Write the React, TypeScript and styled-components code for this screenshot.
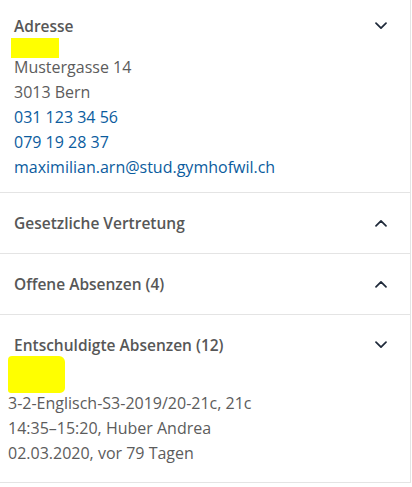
import React from 'react';
import styled, { createGlobalStyle } from 'styled-components';

const GlobalStyle = createGlobalStyle`
  body {
    margin: 0;
    background: #fff;
    font-family: "Open Sans", "Noto Sans", sans-serif;
  }
`;

const Panel = styled.div`
  width: 410px;
  border-right: 1px solid #e4e4e4;
  background: #fff;
`;

const Section = styled.section<{ $padBottom: number }>`
  padding: 20px 0 ${(p) => p.$padBottom}px 0;
  border-bottom: 1px solid #e4e4e4;

  &:first-child {
    padding-top: 16px;
  }
`;

const Header = styled.div`
  display: flex;
  align-items: center;
  justify-content: space-between;
  padding: 0 23px 0 14px;
  height: 20px;
`;

const Title = styled.h3`
  margin: 0;
  font-size: 15.5px;
  font-weight: 600;
  color: #575757;
  line-height: 20px;
`;

const Body = styled.div<{ $indent: number }>`
  padding-left: ${(p) => p.$indent}px;
`;

const Lines = styled.div<{ $shift: number }>`
  margin-top: ${(p) => p.$shift}px;
`;

const Line = styled.div<{ $link?: boolean }>`
  font-size: 16px;
  line-height: 25px;
  color: ${(p) => (p.$link ? '#0b5c9e' : '#5c5c5c')};
`;

const Redact = styled.div<{ $w: number; $h: number; $mt: number; $ml: number; $round?: boolean }>`
  width: ${(p) => p.$w}px;
  height: ${(p) => p.$h}px;
  margin: ${(p) => p.$mt}px 0 0 ${(p) => p.$ml}px;
  background: #ffff00;
  border-radius: ${(p) => (p.$round ? '4px 6px 5px 3px' : '0')};
`;

const Chevron = ({ up }: { up?: boolean }) => (
  <svg width="12" height="8" viewBox="0 0 12 8" aria-hidden>
    <path
      d={up ? 'M1 6.8 L6 1.8 L11 6.8' : 'M1 1.2 L6 6.2 L11 1.2'}
      fill="none"
      stroke="#1f2a3a"
      strokeWidth="1.7"
      strokeLinecap="round"
      strokeLinejoin="round"
    />
  </svg>
);

export default function App() {
  return (
    <>
      <GlobalStyle />
      <Panel>
        <Section $padBottom={12}>
          <Header>
            <Title>Adresse</Title>
            <Chevron />
          </Header>
          <Body $indent={14}>
            <Redact $w={48} $h={20} $mt={2} $ml={-3} />
            <Lines $shift={-3}>
              <Line>Mustergasse 14</Line>
              <Line>3013 Bern</Line>
              <Line $link>031 123 34 56</Line>
              <Line $link>079 19 28 37</Line>
              <Line $link>maximilian.arn@stud.gymhofwil.ch</Line>
            </Lines>
          </Body>
        </Section>
        <Section $padBottom={20}>
          <Header>
            <Title>Gesetzliche Vertretung</Title>
            <Chevron up />
          </Header>
        </Section>
        <Section $padBottom={20}>
          <Header>
            <Title>Offene Absenzen (4)</Title>
            <Chevron up />
          </Header>
        </Section>
        <Section $padBottom={16}>
          <Header>
            <Title>Entschuldigte Absenzen (12)</Title>
            <Chevron />
          </Header>
          <Body $indent={8}>
            <Redact $w={57} $h={37} $mt={1} $ml={0} $round />
            <Lines $shift={-2}>
              <Line>3-2-Englisch-S3-2019/20-21c, 21c</Line>
              <Line>14:35–15:20, Huber Andrea</Line>
              <Line>02.03.2020, vor 79 Tagen</Line>
            </Lines>
          </Body>
        </Section>
      </Panel>
    </>
  );
}
